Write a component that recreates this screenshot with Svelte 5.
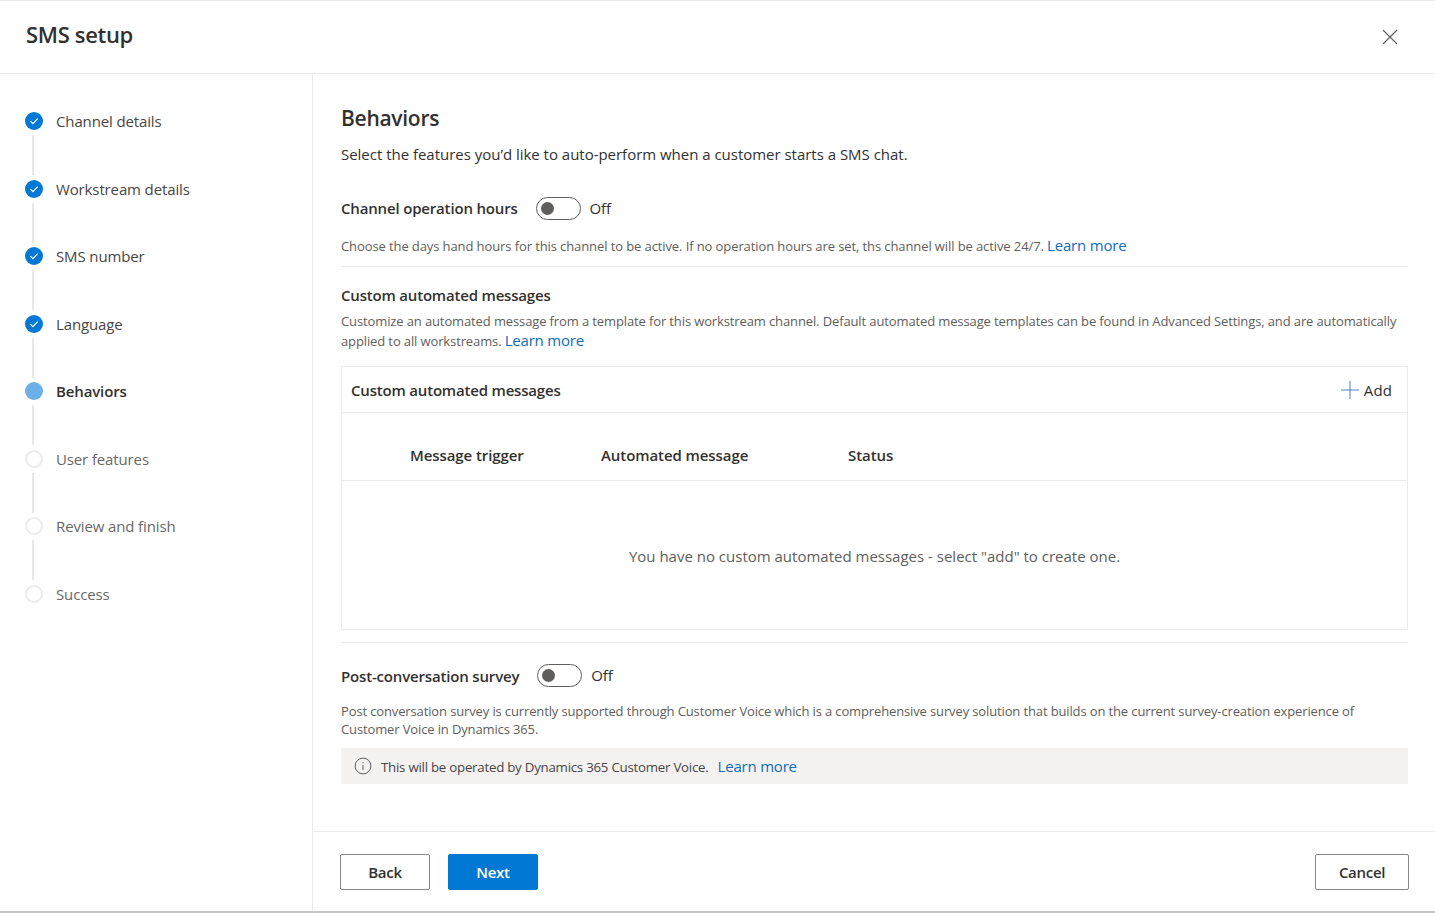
<script lang="ts">
	const steps = [
		{ label: 'Channel details', state: 'done' },
		{ label: 'Workstream details', state: 'done' },
		{ label: 'SMS number', state: 'done' },
		{ label: 'Language', state: 'done' },
		{ label: 'Behaviors', state: 'current' },
		{ label: 'User features', state: 'todo' },
		{ label: 'Review and finish', state: 'todo' },
		{ label: 'Success', state: 'todo' }
	];
	const columns = ['Message trigger', 'Automated message', 'Status'];
</script>

<div class="dialog">
	<header class="dialog__header">
		<h1 class="dialog__title">SMS setup</h1>
		<button class="dialog__close" aria-label="Close">
			<svg width="16" height="16" viewBox="0 0 16 16"><path d="M1 1l14 14M15 1L1 15" stroke="#605e5c" stroke-width="1.1" fill="none" /></svg>
		</button>
	</header>

	<div class="dialog__body">
		<nav class="stepper">
			{#each steps as step, i}
				<div class="step">
					<div class="step__rail">
						<span class="step__dot step__dot--{step.state}">
							{#if step.state === 'done'}
								<svg width="12" height="12" viewBox="0 0 12 12"><path d="M2.4 6.2l2.5 2.5 4.8-5" stroke="#fff" stroke-width="1.2" fill="none" /></svg>
							{/if}
						</span>
						{#if i < steps.length - 1}
							<span class="step__line"></span>
						{/if}
					</div>
					<span class="step__label step__label--{step.state}">{step.label}</span>
				</div>
			{/each}
		</nav>

		<div class="panel">
			<main class="content">
				<h2 class="content__title">Behaviors</h2>
				<p class="content__intro">Select the features you’d like to auto-perform when a customer starts a SMS chat.</p>

				<div class="toggle-row toggle-row--hours">
					<span class="toggle-row__label">Channel operation hours</span>
					<span class="toggle"><span class="toggle__knob"></span></span>
					<span class="toggle-row__state">Off</span>
				</div>
				<p class="hint hint--hours">Choose the days hand hours for this channel to be active. If no operation hours are set, ths channel will be active 24/7. <a href="#top" class="link">Learn more</a></p>

				<hr class="divider divider--first" />

				<h3 class="section-title">Custom automated messages</h3>
				<p class="hint hint--custom">Customize an automated message from a template for this workstream channel. Default automated message templates can be found in Advanced Settings, and are automatically applied to all workstreams. <a href="#top" class="link">Learn more</a></p>

				<section class="grid">
					<div class="grid__bar">
						<span class="grid__name">Custom automated messages</span>
						<button class="grid__add">
							<svg width="18" height="18" viewBox="0 0 18 18"><path d="M9 0v18M0 9h18" stroke="#2b5fb8" stroke-width="1" fill="none" opacity="0.8" /></svg>
							Add
						</button>
					</div>
					<div class="grid__head">
						{#each columns as col}
							<span class="grid__col">{col}</span>
						{/each}
					</div>
					<div class="grid__empty">You have no custom automated messages - select "add" to create one.</div>
				</section>

				<hr class="divider divider--second" />

				<div class="toggle-row toggle-row--survey">
					<span class="toggle-row__label">Post-conversation survey</span>
					<span class="toggle"><span class="toggle__knob"></span></span>
					<span class="toggle-row__state">Off</span>
				</div>
				<p class="hint hint--survey">Post conversation survey is currently supported through Customer Voice which is a comprehensive survey solution that builds on the current survey-creation experience of Customer Voice in Dynamics 365.</p>

				<div class="notice">
					<svg width="18" height="18" viewBox="0 0 18 18"><circle cx="9" cy="9" r="7.9" stroke="#605e5c" stroke-width="1" fill="none" /><path d="M9 8v5" stroke="#605e5c" stroke-width="1" /><circle cx="9" cy="5.6" r="0.7" fill="#605e5c" /></svg>
					<span class="notice__text">This will be operated by Dynamics 365 Customer Voice.</span>
					<a href="#top" class="link notice__link">Learn more</a>
				</div>
			</main>

			<footer class="footer">
				<button class="btn">Back</button>
				<button class="btn btn--primary">Next</button>
				<button class="btn btn--cancel">Cancel</button>
			</footer>
		</div>
	</div>
</div>

<style>
	:global(body) {
		margin: 0;
		background: #fff;
	}

	.dialog {
		height: 913px;
		box-sizing: border-box;
		display: flex;
		flex-direction: column;
		border-top: 1px solid #e8e8e8;
		font-family: "Open Sans", "Noto Sans", sans-serif;
		color: #323130;
		overflow: hidden;
	}

	.dialog__header {
		height: 72px;
		flex-shrink: 0;
		display: flex;
		align-items: center;
		justify-content: space-between;
		padding: 0 37px 0 26px;
		border-bottom: 1px solid #edebe9;
	}

	.dialog__title {
		margin: 0 0 7px;
		font-size: 22px;
		font-weight: 600;
		letter-spacing: -0.33px;
		color: #323130;
	}

	.dialog__close {
		border: none;
		background: none;
		padding: 0;
		height: 16px;
	}

	.dialog__body {
		flex: 1;
		display: flex;
		min-height: 0;
		border-bottom: 2px solid #c8c6c4;
	}

	.stepper {
		width: 313px;
		flex-shrink: 0;
		box-sizing: border-box;
		border-right: 1px solid #edebe9;
		padding: 38px 0 0 25px;
	}

	.step {
		display: flex;
		height: 67.5px;
		gap: 13px;
	}

	.step__rail {
		width: 18px;
		display: flex;
		flex-direction: column;
		align-items: center;
	}

	.step__dot {
		width: 18px;
		height: 18px;
		flex-shrink: 0;
		box-sizing: border-box;
		border-radius: 50%;
		display: flex;
		align-items: center;
		justify-content: center;
	}

	.step__dot--done {
		background: #0078d4;
	}

	.step__dot--current {
		background: #6cb0e8;
	}

	.step__dot--todo {
		border: 2px solid #edebe9;
		background: #fff;
	}

	.step__line {
		width: 2px;
		height: 40px;
		margin: 5px 2px 0 0;
		background: #e8e8e8;
	}

	.step__label {
		font-size: 15px;
		line-height: 18px;
		letter-spacing: -0.13px;
		color: #484644;
	}

	.step__label--current {
		font-weight: 600;
		color: #323130;
	}

	.step__label--todo {
		color: #6a6866;
	}

	.panel {
		flex: 1;
		min-width: 0;
		display: flex;
		flex-direction: column;
	}

	.content {
		flex: 1;
		padding: 29px 27px 0 28px;
	}

	.content__title {
		margin: 0;
		font-size: 21px;
		line-height: 30px;
		font-weight: 600;
		letter-spacing: -0.28px;
	}

	.content__intro {
		margin: 11px 0 0;
		font-size: 15px;
		line-height: 20px;
		letter-spacing: -0.02px;
	}

	.toggle-row {
		display: flex;
		align-items: center;
		height: 24px;
		font-size: 15px;
	}

	.toggle-row--hours {
		margin-top: 32px;
	}

	.toggle-row--survey {
		margin-top: 20px;
	}

	.toggle-row__label {
		font-weight: 600;
		letter-spacing: -0.17px;
	}

	.toggle-row--survey .toggle-row__label {
		margin-top: 2px;
	}

	.toggle {
		width: 45px;
		height: 23px;
		box-sizing: border-box;
		margin-left: 18px;
		border: 1px solid #605e5c;
		border-radius: 12px;
		display: flex;
		align-items: center;
		padding-left: 4px;
	}

	.toggle__knob {
		width: 13px;
		height: 13px;
		border-radius: 50%;
		background: #605e5c;
	}

	.toggle-row__state {
		margin-left: 9px;
		letter-spacing: -0.2px;
		margin-bottom: 1px;
	}

	.hint {
		margin: 0;
		font-size: 13px;
		letter-spacing: -0.12px;
		color: #605e5c;
	}

	.hint--hours {
		margin-top: 16px;
		line-height: 20px;
		letter-spacing: -0.1px;
	}

	.hint--custom {
		line-height: 20px;
		margin-top: 6px;
	}

	.hint--survey {
		margin-top: 15px;
		line-height: 18px;
		letter-spacing: -0.13px;
	}

	.link {
		color: #0f6cbd;
		font-size: 15px;
		line-height: 1;
		text-decoration: none;
		letter-spacing: -0.2px;
	}

	.divider {
		margin: 0;
		border: none;
		border-top: 1px solid #edebe9;
	}

	.divider--first {
		margin-top: 10px;
	}

	.divider--second {
		margin-top: 12px;
	}

	.section-title {
		margin: 18px 0 0;
		font-size: 15px;
		line-height: 20px;
		font-weight: 600;
		letter-spacing: -0.19px;
	}

	.grid {
		margin-top: 15px;
		border: 1px solid #edebe9;
		height: 264px;
		box-sizing: border-box;
		display: flex;
		flex-direction: column;
	}

	.grid__bar {
		height: 46px;
		flex-shrink: 0;
		display: flex;
		align-items: center;
		justify-content: space-between;
		padding: 0 15px 0 9px;
		box-sizing: border-box;
		border-bottom: 1px solid #edebe9;
	}

	.grid__name {
		font-size: 15px;
		font-weight: 600;
		letter-spacing: -0.19px;
	}

	.grid__add {
		display: flex;
		align-items: center;
		gap: 5px;
		border: none;
		background: none;
		padding: 0;
		font: inherit;
		font-size: 15px;
		letter-spacing: 0.1px;
		color: #323130;
	}

	.grid__head {
		height: 68px;
		flex-shrink: 0;
		box-sizing: border-box;
		display: grid;
		grid-template-columns: 191px 247px 1fr;
		align-items: center;
		padding: 16px 0 0 68px;
		border-bottom: 1px solid #edebe9;
	}

	.grid__col {
		font-size: 15px;
		font-weight: 600;
		letter-spacing: -0.08px;
	}

	.grid__empty {
		flex: 1;
		display: flex;
		align-items: center;
		justify-content: center;
		padding-top: 2px;
		font-size: 15px;
		color: #605e5c;
	}

	.notice {
		margin-top: 10px;
		height: 36px;
		display: flex;
		align-items: center;
		padding-left: 13px;
		background: #f3f2f1;
	}

	.notice__text {
		margin: 1px 0 0 9px;
		font-size: 13.3px;
		letter-spacing: -0.25px;
		color: #484644;
	}

	.notice__link {
		margin: 1px 0 0 9px;
	}

	.footer {
		height: 80px;
		flex-shrink: 0;
		box-sizing: border-box;
		border-top: 1px solid #edebe9;
		display: flex;
		align-items: flex-start;
		gap: 18px;
		padding: 22px 26px 0 27px;
	}

	.btn {
		width: 90px;
		height: 36px;
		box-sizing: border-box;
		border: 1px solid #8a8886;
		border-radius: 2px;
		background: #fff;
		font-family: inherit;
		font-size: 15px;
		font-weight: 600;
		letter-spacing: -0.3px;
		color: #323130;
		padding: 0;
	}

	.btn--primary {
		background: #0078d4;
		border-color: #0078d4;
		color: #fff;
	}

	.btn--cancel {
		width: 94px;
		margin-left: auto;
	}
</style>
